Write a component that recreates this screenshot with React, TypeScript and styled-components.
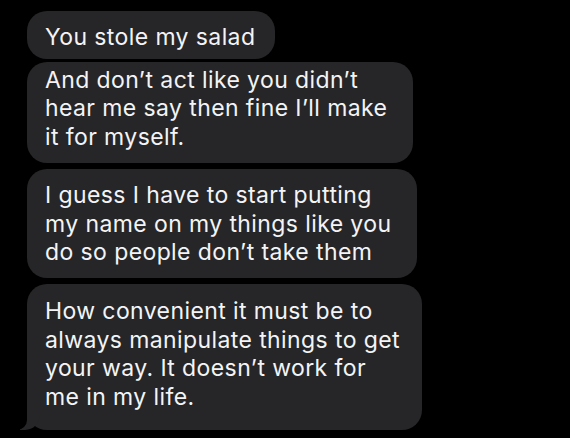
import styled, { createGlobalStyle } from 'styled-components'

const GlobalStyle = createGlobalStyle`
  html, body {
    margin: 0;
    padding: 0;
    background: #000000;
  }
  body {
    font-family: Inter, "Liberation Sans", Arial, sans-serif;
  }
`

type Msg = {
  text: string
  pt: number
  pb: number
  pr: number
  gap: number
  tail?: boolean
}

const messages: Msg[] = [
  { text: 'You stole my salad', pt: 12, pb: 7, pr: 20, gap: 0 },
  {
    text: 'And don\u2019t act like you didn\u2019t\nhear me say then fine I\u2019ll make\nit for myself.',
    pt: 4,
    pb: 11,
    pr: 26,
    gap: 3,
  },
  {
    text: 'I guess I have to start putting\nmy name on my things like you\ndo so people don\u2019t take them',
    pt: 12,
    pb: 11,
    pr: 26,
    gap: 6,
  },
  {
    text: 'How convenient it must be to\nalways manipulate things to get\nyour way. It doesn\u2019t work for\nme in my life.',
    pt: 13,
    pb: 18,
    pr: 22,
    gap: 6,
    tail: true,
  },
]

export default function App() {
  return (
    <Screen>
      <GlobalStyle />
      <Thread>
        {messages.map((m, i) => (
          <Bubble key={i} $pt={m.pt} $pb={m.pb} $pr={m.pr} $gap={m.gap} $tail={!!m.tail}>
            {m.text}
          </Bubble>
        ))}
      </Thread>
    </Screen>
  )
}

const Screen = styled.div`
  width: 570px;
  height: 438px;
  background: #000000;
  overflow: hidden;
`

const Thread = styled.div`
  display: flex;
  flex-direction: column;
  align-items: flex-start;
  padding: 11px 0 0 27px;
`

const Bubble = styled.div<{ $pt: number; $pb: number; $pr: number; $gap: number; $tail: boolean }>`
  position: relative;
  width: fit-content;
  margin-top: ${p => p.$gap}px;
  padding: ${p => p.$pt}px ${p => p.$pr}px ${p => p.$pb}px 18px;
  background: #262628;
  border-radius: 20px;
  color: #f4f4f6;
  font-size: 23px;
  line-height: 28.7px;
  letter-spacing: 0.4px;
  white-space: pre-line;

  ${p =>
    p.$tail &&
    `
    &::before {
      content: "";
      position: absolute;
      bottom: 0;
      left: -7px;
      width: 20px;
      height: 20px;
      background: #262628;
      border-bottom-right-radius: 15px;
    }
    &::after {
      content: "";
      position: absolute;
      bottom: 0;
      left: -10px;
      width: 10px;
      height: 20px;
      background: #000000;
      border-bottom-right-radius: 10px;
    }
  `}
`
